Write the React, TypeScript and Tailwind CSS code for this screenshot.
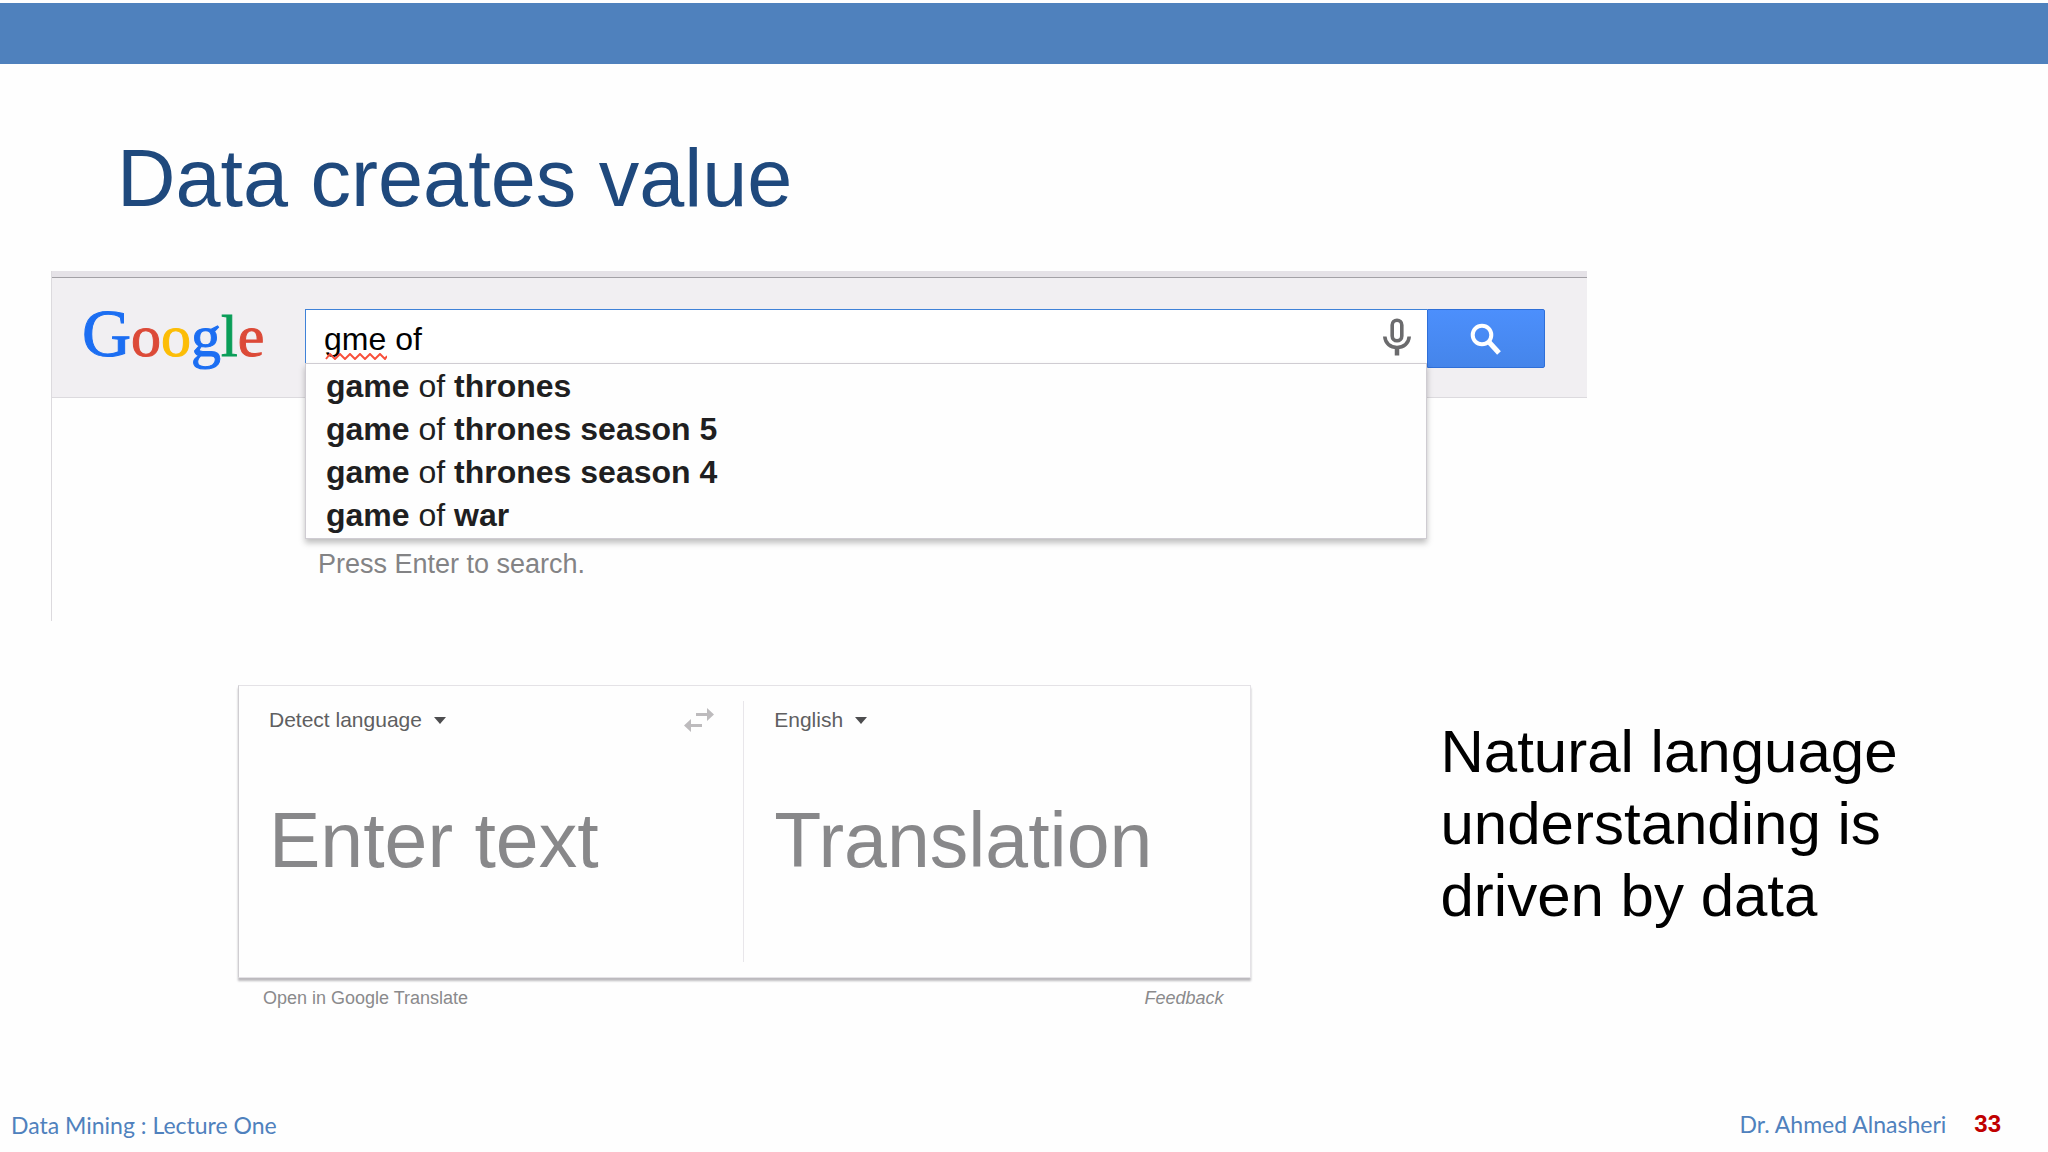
import { useState } from "react";

const LOGO = [
  { letter: "G", className: "text-[68px] text-[#1c6ef2]" },
  { letter: "o", className: "text-[60px] text-[#dc4a38]" },
  { letter: "o", className: "text-[60px] text-[#fcbd06]" },
  { letter: "g", className: "text-[60px] text-[#1c6ef2]" },
  { letter: "l", className: "text-[60px] text-[#0a9d58]" },
  { letter: "e", className: "text-[60px] text-[#dc4a38]" },
];

const SUGGESTIONS = [
  { id: 1, rest: "thrones" },
  { id: 2, rest: "thrones season 5" },
  { id: 3, rest: "thrones season 4" },
  { id: 4, rest: "war" },
];

function GoogleLogo() {
  return (
    <a
      href="#"
      aria-label="Google"
      className="flex w-[223px] shrink-0 items-baseline font-['Liberation_Serif',serif] leading-[48px] [-webkit-text-stroke:1px_currentColor]"
    >
      {LOGO.map((l, i) => (
        <span key={i} className={l.className}>{l.letter}</span>
      ))}
    </a>
  );
}

function MicIcon() {
  return (
    <svg viewBox="0 0 28 38" className="h-[38px] w-7" fill="none" stroke="#6b6b6d" strokeWidth="3.6">
      <rect x="9.2" y="2.2" width="9.6" height="20.6" rx="4.8" />
      <path d="M1.8 18.5C2.2 25.500 7.500 29.500 14 29.500S25.800 25.500 26.200 18.500" />
      <path d="M14 29v8.500" strokeWidth="4.500" />
    </svg>
  );
}

function SearchIcon() {
  return (
    <svg viewBox="0 0 32 32" className="h-8 w-8" fill="none" stroke="#fff">
      <circle cx="12" cy="12" r="9.300" strokeWidth="4" />
      <path d="M18.500 18.500L29 30" strokeWidth="5" />
    </svg>
  );
}

function SwapIcon() {
  return (
    <svg viewBox="0 0 30 24" className="h-6 w-[30px]" fill="#bdbbbd">
      <path d="M12 5h11V0l7 6.500L23 13V8H12z" />
      <path d="M18 16H7v-5L0 17.500 7 24v-5h11z" />
    </svg>
  );
}

function SearchPanel() {
  const [query, setQuery] = useState("gme of");

  return (
    <section className="ml-[51px] h-[350px] w-3/4 border-l border-[#dcdade]">
      <div className="h-[6px] bg-[#e5e2e7]" />
      <form
        onSubmit={(e) => e.preventDefault()}
        className="flex h-[121px] border-t border-b border-t-[#a3a1a6] border-b-[#dcdade] bg-[#f1eff2] pt-[31px] pr-[42px] pl-[30px]"
      >
        <GoogleLogo />
        <div className="relative min-w-0 flex-1">
          <div className="flex h-[54px] items-center border-t border-l border-[#3f82d8] bg-white pr-4 pl-[18px]">
            <input
              aria-label="Search"
              value={query}
              onChange={(e) => setQuery(e.target.value)}
              spellCheck={false}
              className="min-w-0 flex-1 pt-1 text-[32px] leading-[44px] text-black outline-none"
            />
            <button type="button" aria-label="Search by voice">
              <MicIcon />
            </button>
          </div>
          {/* spelling mark below the first word */}
          <svg viewBox="0 0 62 7" className="absolute top-[44px] left-[20px] h-[7px] w-[62px]" fill="none" stroke="#f8503c" strokeWidth="2">
            <path d="M1 6L5 1l5 5 5-5 5 5 5-5 5 5 5-5 5 5 5-5 5 5 5-5 5 5 2-3" />
          </svg>
          <div className="absolute inset-x-0 top-[54px] border border-[#cfccd2] bg-[#fefefe] shadow-[0_4px_6px_rgba(0,0,0,0.25)]">
            <ul className="pt-px pb-px pl-5 text-[32px] leading-[43px] text-[#1f1f21]">
              {SUGGESTIONS.map((s) => (
                <li key={s.id}>
                  <b>game</b> of <b>{s.rest}</b>
                </li>
              ))}
            </ul>
          </div>
          <p className="absolute top-[237px] left-[13px] text-[27px] leading-9 text-[#838385]">
            Press Enter to search.
          </p>
        </div>
        <button
          type="submit"
          aria-label="Google Search"
          className="flex h-[59px] w-[118px] shrink-0 items-center justify-center rounded-r-[2px] border border-[#2f6fd8] bg-linear-to-b from-[#4c8ffc] to-[#4585ea]"
        >
          <SearchIcon />
        </button>
      </form>
    </section>
  );
}

function LanguageSelect({ label, value }: { label: string; value: string }) {
  return (
    <div className="flex items-center gap-3">
      <select
        aria-label={label}
        className="field-sizing-content h-8 appearance-none text-[21px] leading-8 text-[#5f5f61] outline-none"
      >
        <option>{value}</option>
      </select>
      <svg viewBox="0 0 12 7" className="h-[7px] w-3" fill="#4d4d4f">
        <path d="M0 0h12L6 7z" />
      </svg>
    </div>
  );
}

function TranslateCard() {
  return (
    <section>
      <div className="grid grid-cols-2 border border-[#e4e2e6] border-l-[#d0ced2] bg-[#fefefe] py-[15px] shadow-[0_3px_2px_rgba(90,85,95,0.4)]">
        <div className="h-[261px] border-r border-[#e8e6ea] pl-[30px]">
          <div className="flex items-center justify-between pt-[3px] pr-[29px]">
            <LanguageSelect label="Source language" value="Detect language" />
            <button type="button" aria-label="Swap languages">
              <SwapIcon />
            </button>
          </div>
          <textarea
            aria-label="Source text"
            placeholder="Enter text"
            className="mt-[60px] block h-[100px] w-full resize-none overflow-hidden text-[77px] leading-[88px] outline-none placeholder:text-[#88888a]"
          />
        </div>
        <div className="pl-[30px]">
          <div className="flex pt-[3px]">
            <LanguageSelect label="Target language" value="English" />
          </div>
          <textarea
            aria-label="Translated text"
            placeholder="Translation"
            readOnly
            className="mt-[60px] block h-[100px] w-full resize-none overflow-hidden text-[77px] leading-[88px] outline-none placeholder:text-[#88888a]"
          />
        </div>
      </div>
      <div className="flex justify-between pt-2 pr-[27px] pl-[25px] text-[18px] leading-6 text-[#8a8a8c]">
        <a href="#">Open in Google Translate</a>
        <a href="#" className="italic">Feedback</a>
      </div>
    </section>
  );
}

export default function App() {
  return (
    <div className="flex min-h-screen flex-col bg-[#fefefe] font-['Liberation_Sans',Arial,sans-serif]">
      <header className="mt-[3px] h-[61px] bg-[#4f81bd]" />
      <h1 className="mt-16 mb-[43px] pl-[117px] text-[81px] leading-[100px] text-[#1f497d]">
        Data creates value
      </h1>
      <SearchPanel />

      <div className="mt-[64px] grid grid-cols-[5fr_3fr] gap-[190px] pl-[238px]">
        <TranslateCard />
        <p className="max-w-[500px] pt-[31px] text-[60px] leading-[72px] text-black">
          Natural language understanding is driven by data
        </p>
      </div>

      <footer className="mt-auto flex items-center justify-between pr-[47px] pb-[10px] pl-[11px] font-[Lato,sans-serif] text-[23px] leading-8 text-[#4f81bd]">
        <span>Data Mining : Lecture One</span>
        <div className="flex items-center gap-7 pb-[2px]">
          <span>Dr. Ahmed Alnasheri</span>
          <span className="font-['Liberation_Sans',Arial,sans-serif] text-[24px] font-bold text-[#c00000]">33</span>
        </div>
      </footer>
    </div>
  );
}
